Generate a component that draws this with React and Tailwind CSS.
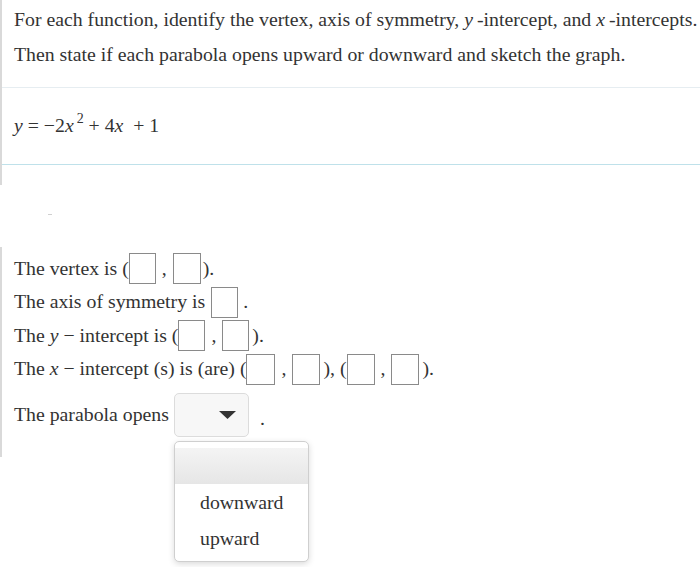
import React from "react";

const Box = ({ w = 27 }) => (
  <span
    className="inline-block h-[31px] border border-[#8a8a8a] bg-white align-middle"
    style={{ width: w }}
  />
);

export default function App() {
  const serif = { fontFamily: '"Liberation Serif", "Times New Roman", serif' };
  return (
    <div className="w-[700px] h-[567px] bg-white text-[#333] text-[19.8px] relative overflow-hidden" style={serif}>
      <div className="border-l-2 border-[#d9d9d9]">
        <div className="h-[88px] pl-[12px] pt-[2px] leading-[35px] border-b border-[#e6edf1] whitespace-nowrap">
          <div>
            For each function, identify the vertex, axis of symmetry, <i>y</i>&thinsp;-intercept, and <i>x</i>&thinsp;-intercepts.
          </div>
          <div>Then state if each parabola opens upward or downward and sketch the graph.</div>
        </div>
        <div className="h-[77px] pl-[12px] flex items-center border-b border-[#bfe1ea]">
          <span className="whitespace-nowrap">
            <i>y</i> = −2<i>x</i>
            <span className="text-[14px] relative top-[-9px] ml-[3px]">2</span> + 4<i>x</i>&nbsp; + 1
          </span>
        </div>
        <div className="h-[20px]" />
      </div>
      <div className="h-[62px] relative">
        <div className="absolute left-[48px] top-[29px] w-[4px] h-px bg-[#d0d0d0]" />
      </div>
      <div className="border-l-2 border-[#d9d9d9] relative h-[210px] pl-[12px] pt-[5px] whitespace-nowrap">
        <div className="h-[33.5px] flex items-center">
          <span>The vertex is (</span>
          <Box />
          <span className="mx-[6px]">,</span>
          <Box w={28} />
          <span className="ml-[2px]">).</span>
        </div>
        <div className="h-[33.5px] flex items-center">
          <span className="mr-[6px]">The axis of symmetry is</span>
          <Box />
          <span className="ml-[5px]">.</span>
        </div>
        <div className="h-[33.5px] flex items-center">
          <span>The <i>y</i> &minus; intercept is (</span>
          <Box />
          <span className="mx-[6px]">,</span>
          <Box />
          <span className="ml-[3px]">).</span>
        </div>
        <div className="h-[33.5px] flex items-center">
          <span>The <i>x</i> &minus; intercept (s) is (are) (</span>
          <Box w={29} />
          <span className="mx-[6px]">,</span>
          <Box w={28} />
          <span className="ml-[3px]">), (</span>
          <Box w={28} />
          <span className="mx-[6px]">,</span>
          <Box w={28} />
          <span className="ml-[3px]">).</span>
        </div>
        <div className="mt-[7px] h-[44px] flex items-center">
          <span className="mr-[5px]">The parabola opens</span>
          <div className="w-[75px] h-[44px] rounded-[5px] border border-[#dcdcdc] bg-[#f7f7f7] flex items-center justify-end pr-[12px]">
            <svg width="17" height="8" viewBox="0 0 17 8">
              <path d="M0 0 L17 0 L8.5 8 Z" fill="#333" />
            </svg>
          </div>
          <span className="ml-[11px] relative top-[4px]">.</span>
        </div>
        <div className="absolute left-[172px] top-[194px] w-[135px] h-[121px] rounded-[5px] border border-[#cfcfcf] bg-white shadow-[0_2px_6px_rgba(0,0,0,0.15)] pt-[6px] z-10">
          <div className="h-[36px] bg-gradient-to-b from-[#f4f4f4] to-[#e6e6e6]" />
          <div className="h-[37px] pl-[25px] flex items-center">downward</div>
          <div className="h-[36px] pl-[25px] flex items-center">upward</div>
        </div>
      </div>
    </div>
  );
}
